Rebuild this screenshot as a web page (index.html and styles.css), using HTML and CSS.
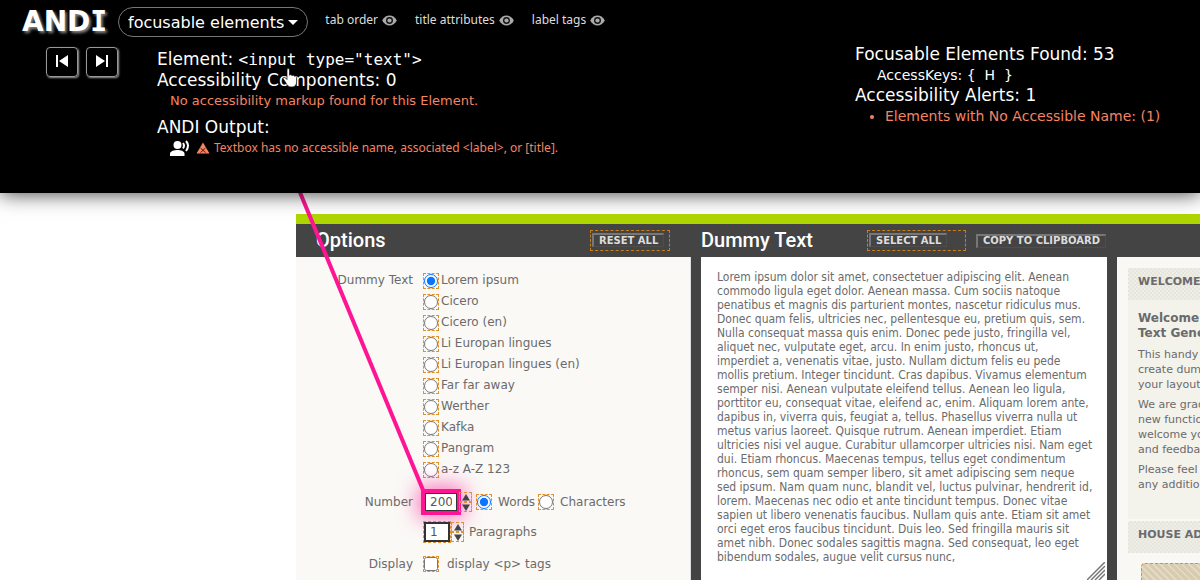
FILE: index.html
```html
<!DOCTYPE html>
<html lang="en">
<head>
<meta charset="utf-8">
<title>ANDI</title>
<link rel="stylesheet" href="styles.css">
</head>
<body>
<svg class="defs" aria-hidden="true">
  <symbol id="eye" viewBox="0 0 16 12"><path d="M0 6C2 2 5 .6 8 .6S14 2 16 6c-2 4-5 5.400-8 5.400S2 10 0 6z" fill="#aaa"/><circle cx="8" cy="6" r="3.800" fill="#111"/><circle cx="8" cy="6" r="2.300" fill="#aaa"/></symbol>
  <symbol id="up" viewBox="0 0 10 9"><path d="M5 1l4 6.500H1z"/></symbol>
  <symbol id="down" viewBox="0 0 10 9"><path d="M5 8L1 1.500h8z"/></symbol>
</svg>
<header class="andi">
  <div class="bar">
    <h1 class="logo">AND<span class="logo-i">I</span></h1>
    <button class="module" type="button">focusable elements<span class="caret"></span></button>
    <div class="toggles">
      <button class="toggle" type="button">tab order<svg class="eye"><use href="#eye"/></svg></button>
      <button class="toggle" type="button">title attributes<svg class="eye"><use href="#eye"/></svg></button>
      <button class="toggle" type="button">label tags<svg class="eye"><use href="#eye"/></svg></button>
    </div>
  </div>
  <div class="details">
    <nav class="nav">
      <button class="step" type="button" aria-label="Previous element"><svg class="step-icon" viewBox="0 0 14 12"><path d="M1 0h2v12H1zM13 0v12L4 6z"/></svg></button>
      <button class="step" type="button" aria-label="Next element"><svg class="step-icon" viewBox="0 0 14 12"><path d="M11 0h2v12h-2zM1 0v12l9-6z"/></svg></button>
    </nav>
    <section class="element">
      <h2 class="line">Element: <code class="tag">&lt;input type="text"&gt;</code></h2>
      <h2 class="line">Accessibility Components: 0</h2>
      <p class="note">No accessibility markup found for this Element.</p>
      <h2 class="line output-title">ANDI Output:</h2>
      <p class="output">
        <svg class="speaker" viewBox="0 0 20 17"><circle cx="7.500" cy="5" r="4"/><path d="M0 16v-2.300c0-2.600 4.500-3.700 7.500-3.700s7 1.100 7 3.700V16z"/><path d="M13 3q2 2.500 0 5.500M16 1q4 4.500 0 10" fill="none" stroke="#fff" stroke-width="2"/></svg>
        <svg class="alert" viewBox="0 0 14 12"><path d="M7 .5L13.500 11.500H.5z" fill="#f58463"/><path d="M4.500 6l5 4.500M9.500 6l-5 4.500" stroke="#4c1c12"/></svg>
        Textbox has no accessible name, associated &lt;label&gt;, or [title].
      </p>
    </section>
    <section class="results">
      <h2 class="line">Focusable Elements Found: 53</h2>
      <p class="keys">AccessKeys: {&nbsp; H &nbsp;}</p>
      <h2 class="line">Accessibility Alerts: 1</h2>
      <ul class="alerts"><li>Elements with No Accessible Name: (1)</li></ul>
    </section>
  </div>
  <svg class="pointer" viewBox="0 0 16 20" aria-hidden="true"><path d="M5 1.800c0-1.600 2.500-1.600 2.500 0v5.400c.6-.8 2.300-.6 2.500.5.700-.8 2.200-.5 2.400.6.800-.6 2.200-.2 2.200 1.200v4c0 3.500-1.600 5.500-5 5.500-3.200 0-4.200-1.300-5.600-4L1.200 10.800c-.6-1.500 1-2.200 2-1.100L5 11.500z" fill="#fff" stroke="#111" stroke-width=".7"/></svg>
</header>
<main class="stage">
  <div class="board">
    <section class="column">
      <div class="head head-options">
        <h2 class="title">Options</h2>
        <span class="focusable focusable-reset"><button class="pixel" type="button">RESET ALL</button></span>
      </div>
      <form class="options">
        <span class="field-name">Dummy Text</span>
        <div class="choices">
          <label class="choice"><input class="tick" type="radio" name="text" checked>Lorem ipsum</label>
          <label class="choice"><input class="tick" type="radio" name="text">Cicero</label>
          <label class="choice"><input class="tick" type="radio" name="text">Cicero (en)</label>
          <label class="choice"><input class="tick" type="radio" name="text">Li Europan lingues</label>
          <label class="choice"><input class="tick" type="radio" name="text">Li Europan lingues (en)</label>
          <label class="choice"><input class="tick" type="radio" name="text">Far far away</label>
          <label class="choice"><input class="tick" type="radio" name="text">Werther</label>
          <label class="choice"><input class="tick" type="radio" name="text">Kafka</label>
          <label class="choice"><input class="tick" type="radio" name="text">Pangram</label>
          <label class="choice"><input class="tick" type="radio" name="text">a-z A-Z 123</label>
        </div>
        <span class="field-name row-name">Number</span>
        <div class="row">
          <input class="count active" type="text" value="200" aria-label="Number">
          <span class="spin"><button class="spin-btn" type="button" aria-label="More"><svg class="arrow"><use href="#up"/></svg></button><button class="spin-btn" type="button" aria-label="Less"><svg class="arrow"><use href="#down"/></svg></button></span>
          <label class="choice unit"><input class="tick" type="radio" name="unit" checked>Words</label>
          <label class="choice unit"><input class="tick" type="radio" name="unit">Characters</label>
        </div>
        <div class="row second">
          <input class="count paragraphs" id="paragraphs" type="text" value="1">
          <span class="spin"><button class="spin-btn" type="button" aria-label="More paragraphs"><svg class="arrow"><use href="#up"/></svg></button><button class="spin-btn" type="button" aria-label="Fewer paragraphs"><svg class="arrow"><use href="#down"/></svg></button></span>
          <label class="after" for="paragraphs">Paragraphs</label>
        </div>
        <span class="field-name row-name">Display</span>
        <div class="row">
          <label class="choice display"><input class="tick" type="checkbox">display &lt;p&gt; tags</label>
        </div>
      </form>
    </section>
    <section class="column">
      <div class="head">
        <h2 class="title">Dummy Text</h2>
        <span class="focusable focusable-select"><button class="pixel" type="button">SELECT ALL</button></span>
        <button class="pixel" type="button">COPY TO CLIPBOARD</button>
      </div>
      <div class="paper">
        <textarea class="dummy" wrap="off" aria-label="Dummy Text">Lorem ipsum dolor sit amet, consectetuer adipiscing elit. Aenean
commodo ligula eget dolor. Aenean massa. Cum sociis natoque
penatibus et magnis dis parturient montes, nascetur ridiculus mus.
Donec quam felis, ultricies nec, pellentesque eu, pretium quis, sem.
Nulla consequat massa quis enim. Donec pede justo, fringilla vel,
aliquet nec, vulputate eget, arcu. In enim justo, rhoncus ut,
imperdiet a, venenatis vitae, justo. Nullam dictum felis eu pede
mollis pretium. Integer tincidunt. Cras dapibus. Vivamus elementum
semper nisi. Aenean vulputate eleifend tellus. Aenean leo ligula,
porttitor eu, consequat vitae, eleifend ac, enim. Aliquam lorem ante,
dapibus in, viverra quis, feugiat a, tellus. Phasellus viverra nulla ut
metus varius laoreet. Quisque rutrum. Aenean imperdiet. Etiam
ultricies nisi vel augue. Curabitur ullamcorper ultricies nisi. Nam eget
dui. Etiam rhoncus. Maecenas tempus, tellus eget condimentum
rhoncus, sem quam semper libero, sit amet adipiscing sem neque
sed ipsum. Nam quam nunc, blandit vel, luctus pulvinar, hendrerit id,
lorem. Maecenas nec odio et ante tincidunt tempus. Donec vitae
sapien ut libero venenatis faucibus. Nullam quis ante. Etiam sit amet
orci eget eros faucibus tincidunt. Duis leo. Sed fringilla mauris sit
amet nibh. Donec sodales sagittis magna. Sed consequat, leo eget
bibendum sodales, augue velit cursus nunc,</textarea>
        <svg class="grip" viewBox="0 0 18 18" aria-hidden="true"><path d="M0 18L18 0M4 18L18 4M8 18L18 8M12 18l6-6" stroke="#777" stroke-width="1.500"/></svg>
      </div>
    </section>
    <aside class="column side-column">
      <div class="side">
        <h3 class="side-head">WELCOME</h3>
        <div class="side-body">
          <h4 class="side-title">Welcome to the Dummy<br>Text Generator!</h4>
          <p class="side-text">This handy tool helps you<br>create dummy text for all<br>your layout needs.</p>
          <p class="side-text">We are gradually adding<br>new functionality and<br>welcome your suggestions<br>and feedback.</p>
          <p class="side-text">Please feel free to send us<br>any additional ideas.</p>
        </div>
        <h3 class="side-head ad-head">HOUSE AD</h3>
        <div class="ad"></div>
      </div>
    </aside>
  </div>
</main>
<svg class="laser" aria-hidden="true"><line x1="299" y1="190" x2="423" y2="490" stroke="#ff1493" stroke-width="4"/></svg>
</body>
</html>
```
FILE: styles.css
```css
* { box-sizing: border-box; }

body {
  margin: 0;
  height: 100vh;
  overflow: hidden;
  display: flex;
  flex-direction: column;
  position: relative;
  background: #fff;
  font-family: "DejaVu Sans", sans-serif;
  font-size: 12px;
  color: #6b6b6b;
}

h1, h2, h3, h4, p, ul { margin: 0; padding: 0; }
button { font-family: inherit; color: inherit; background: none; border: 0; padding: 0; }
.defs { position: absolute; width: 0; height: 0; }

/* Inspector bar */
.andi {
  position: relative;
  z-index: 2;
  flex: none;
  background: #000;
  color: #fff;
  padding-bottom: 35px;
  box-shadow: 0 0 20px rgba(0, 0, 0, 0.8);
}
.bar { display: flex; align-items: center; height: 44px; padding-left: 22px; }
.logo { width: 96px; font-size: 28px; line-height: 44px; text-shadow: 2px 2px 3px #888; }
.logo-i { font-family: "DejaVu Sans Mono", monospace; }
.module {
  display: flex;
  align-items: center;
  gap: 4px;
  height: 30px;
  padding: 0 9px;
  border: 1px solid #777;
  border-radius: 15px;
  font-size: 16px;
}
.caret { border: 5px solid transparent; border-top-color: #fff; border-bottom: 0; }
.toggles { display: flex; gap: 18px; margin-left: 17px; padding-bottom: 4px; }
.toggle { display: flex; align-items: center; gap: 4px; font: 12px/18px "Noto Sans", sans-serif; color: #ddd; }
.eye { width: 15px; height: 11px; }

.details { display: grid; grid-template-columns: 157px 1fr 345px; }
.nav { display: flex; align-items: flex-start; gap: 8px; padding: 3px 0 0 46px; }
.step {
  width: 32px;
  height: 30px;
  border: 1px solid #999;
  border-radius: 4px;
  box-shadow: 1px 1px 2px #999;
}
.step-icon { width: 14px; height: 12px; fill: #fff; }
.element { padding-top: 5px; }
.line { font-size: 17px; font-weight: 400; line-height: 21px; }
.tag { font-family: "DejaVu Sans Mono", monospace; font-size: 16px; }
.note { padding-left: 13px; font-size: 13px; line-height: 20px; color: #f58463; }
.output-title { margin-top: 6px; }
.output {
  display: flex;
  align-items: center;
  gap: 4px;
  padding-left: 13px;
  font: 12px/20px "Noto Sans", sans-serif;
  color: #f58463;
}
.speaker { width: 20px; height: 17px; fill: #fff; margin-right: 2px; }
.alert { width: 14px; height: 12px; }
.keys { padding-left: 22px; font-size: 14px; line-height: 20px; }
.alerts { padding-left: 30px; font-size: 14px; line-height: 20px; color: #f58463; }
.pointer { position: absolute; left: 282px; top: 68px; width: 16px; height: 20px; }

/* Page under inspection */
.stage { flex: 1; min-height: 0; display: flex; padding: 21px 0 0 296px; }
.board {
  flex: 1 0 auto;
  min-width: 1061px;
  display: grid;
  grid-template-columns: 395fr 406fr 240px;
  column-gap: 10px;
  background: #444;
  border-top: 10px solid #b0d600;
}
.column { display: flex; flex-direction: column; min-width: 0; min-height: 0; }
.head { display: flex; align-items: center; flex: none; height: 33px; padding-right: 1px; }
.head-options { padding: 0 21px 0 20px; }
.title { margin-right: auto; font: 500 20px/33px Roboto, sans-serif; color: #fff; }
.focusable { display: flex; height: 21px; padding: 2px 1px; border: 1px dashed #c98018; }
.focusable-reset { width: 80px; }
.focusable-select { width: 99px; margin-right: 10px; }
.pixel {
  height: 14px;
  padding: 0 5px;
  border: 1px solid #4e4e4e;
  border-top: 2px solid #777;
  border-left: 2px solid #777;
  font-size: 10px;
  line-height: 10px;
  font-weight: 700;
  color: #ddd;
  white-space: nowrap;
}

.options {
  flex: 1;
  display: grid;
  grid-template-columns: 117px 1fr;
  column-gap: 10px;
  align-content: start;
  padding-top: 13px;
  background: #faf9f6;
  border-right: 1px solid #ddd;
}
.field-name { text-align: right; line-height: 21px; }
.row-name { line-height: 30px; }
.choices { display: flex; flex-direction: column; margin-bottom: 7px; }
.choice { display: flex; align-items: center; gap: 3px; line-height: 21px; }
.tick { flex: none; width: 14px; height: 14px; margin: 0 0 0 1px; outline: 1px dashed #e0912b; accent-color: #0b75ff; }
.row { display: flex; align-items: center; height: 30px; }
.second { grid-column: 2; margin-bottom: 2px; }
.count {
  width: 34px;
  height: 20px;
  margin-left: 1px;
  padding: 0 4px;
  border: 2px solid #333;
  background: #fff;
  font: 12px/16px "DejaVu Sans", sans-serif;
  color: #555;
}
.active { outline: 4px solid #ff1493; outline-offset: -1px; box-shadow: 0 0 20px 6px rgba(255, 20, 147, 0.6); }
.paragraphs { width: 26px; outline: 1px dashed #e0912b; }
.spin { display: flex; flex-direction: column; position: relative; margin-left: 1px; }
.spin-btn { display: flex; width: 13px; height: 10px; border: 1px dashed #e0912b; justify-content: center; }
.arrow { width: 10px; height: 9px; fill: #444; }
.unit { gap: 7px; margin-left: 4px; }
.unit + .unit { margin-left: 3px; }
.after { margin-left: 5px; }
.display { gap: 9px; }

.paper { position: relative; flex: 1; min-height: 0; display: flex; background: #fff; }
.dummy {
  flex: 1;
  min-width: 0;
  margin: 0;
  padding: 13px 10px 0 16px;
  border: 0;
  overflow: hidden;
  resize: none;
  background: #fff;
  color: #6b6b6b;
  font: 12px/14px "DejaVu Sans Condensed", "DejaVu Sans", sans-serif;
}
.grip { position: absolute; right: 2px; bottom: 0; width: 18px; height: 18px; }

.side-column { padding-top: 33px; }
.side { flex: 1; min-height: 0; padding: 11px 0 0 11px; background: #faf8f4; }
.side-head {
  height: 32px;
  padding-left: 10px;
  font-size: 11px;
  line-height: 28px;
  background: repeating-conic-gradient(#e6e6df 0 25%, #eeede6 0 50%) 0 0 / 4px 4px;
}
.side-body { height: 219px; padding: 11px 0 0 10px; background: #f3f2eb; }
.side-title { font-size: 12px; line-height: 15px; margin-bottom: 6px; }
.side-text { font-size: 11px; line-height: 15px; margin-bottom: 5px; }
.ad-head { margin-top: 2px; }
.ad {
  height: 60px;
  margin: 10px 0 0 13px;
  border: 1px dashed #e0912b;
  border-radius: 4px 0 0 0;
  background: repeating-linear-gradient(45deg, #d8ccb0 0 3px, #e4dac4 3px 5px);
}

.laser { position: absolute; z-index: 1; left: 0; top: 0; width: 100%; height: 100%; pointer-events: none; }
```
